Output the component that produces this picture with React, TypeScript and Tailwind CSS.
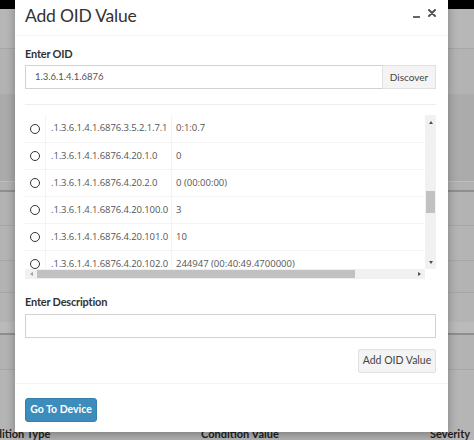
import React from 'react';

interface OidRow {
  oid: string;
  value: string;
}

const rows: OidRow[] = [
  { oid: '.1.3.6.1.4.1.6876.3.5.2.1.7.1', value: '0:1:0.7' },
  { oid: '.1.3.6.1.4.1.6876.4.20.1.0', value: '0' },
  { oid: '.1.3.6.1.4.1.6876.4.20.2.0', value: '0 (00:00:00)' },
  { oid: '.1.3.6.1.4.1.6876.4.20.100.0', value: '3' },
  { oid: '.1.3.6.1.4.1.6876.4.20.101.0', value: '10' },
  { oid: '.1.3.6.1.4.1.6876.4.20.102.0', value: '244947 (00:40:49.4700000)' },
];

const sans = "font-['Lato','Noto_Sans',sans-serif]";
const tableFont = "font-['Open_Sans','Noto_Sans',sans-serif]";

// dimmed page behind the modal
const Backdrop: React.FC = () => (
  <div className="flex flex-col w-full h-full">
    <div className="h-[9px] bg-black" />
    <div className="h-[41px] bg-[#b7b7b7] border-b border-[#a7a7a7]" />
    <div className="h-[46px] bg-[#b3b3b3]" />
    <div className="h-[90px] bg-[#ababab] border-b border-[#bdbdbd]" />
    <div className="h-[10px] bg-[#b1b1b1] border-b-2 border-[#8f8f8f]" />
    <div className="h-[35px] bg-[#b3b3b3] border-b border-[#a6a6a6]" />
    <div className="h-[36px] bg-[#b4b4b4] border-b border-[#a6a6a6]" />
    <div className="h-[32px] bg-[#b3b3b3] border-b border-[#a6a6a6]" />
    <div className="h-[30px] bg-[#b4b4b4]" />
    <div className="h-[13px] bg-[#bababa] border-b-2 border-[#8e8e8e]" />
    <div className="h-[36px] bg-[#b3b3b3] border-b border-[#a6a6a6]" />
    <div className="flex-1 bg-[#b5b5b5]">
      <div
        className={`flex items-start pt-[58px] text-[11px] font-bold text-[#222] leading-[12px] ${sans}`}
      >
        <span className="ml-[-24px] w-[225px] shrink-0">Condition Type</span>
        <span className="w-[229px] shrink-0">Condition Value</span>
        <span className="shrink-0">Severity</span>
      </div>
    </div>
  </div>
);

const Radio: React.FC = () => (
  <span className="block w-[10px] h-[10px] rounded-full border-[1.5px] border-[#333] bg-white" />
);

const OidTable: React.FC = () => (
  <div className="flex flex-col">
    <div className="flex h-[154px]">
      <div className="flex-1 overflow-hidden">
        <div className={`w-[520px] text-[9.5px] text-[#555] ${tableFont}`}>
          {rows.map((row, i) => (
            <div
              key={row.oid}
              className={`flex items-center h-[27px] ${i > 0 ? 'border-t border-[#f4f4f4]' : ''}`}
            >
              <div className="w-[21px] h-full flex items-center justify-center border-r border-[#f4f4f4]">
                <Radio />
              </div>
              <div className="w-[126px] h-full flex items-center pl-[5px] border-r border-[#f4f4f4] tracking-[-0.1px]">
                {row.oid}
              </div>
              <div className="flex-1 h-full flex items-center pl-[4px]">{row.value}</div>
            </div>
          ))}
        </div>
      </div>
      <div className="w-[11px] bg-[#f1f1f1] flex flex-col items-center">
        <div className="h-[12px] flex items-center justify-center pt-[2px]">
          <span className="block w-0 h-0 border-l-[2.5px] border-r-[2.5px] border-b-[3px] border-l-transparent border-r-transparent border-b-[#505050]" />
        </div>
        <div className="h-[64px]" />
        <div className="w-[9px] h-[22px] bg-[#c1c1c1]" />
        <div className="flex-1" />
        <div className="h-[12px] flex items-center justify-center pb-[2px]">
          <span className="block w-0 h-0 border-l-[2.5px] border-r-[2.5px] border-t-[3px] border-l-transparent border-r-transparent border-t-[#505050]" />
        </div>
      </div>
    </div>
    <div className="flex h-[10px]">
      <div className="w-[400px] bg-[#f1f1f1] flex items-center">
        <div className="w-[12px] flex items-center justify-center">
          <span className="block w-0 h-0 border-t-[2.5px] border-b-[2.5px] border-r-[3px] border-t-transparent border-b-transparent border-r-[#a0a0a0]" />
        </div>
        <div className="w-[318px] h-[8px] bg-[#c1c1c1]" />
        <div className="flex-1" />
        <div className="w-[12px] flex items-center justify-center">
          <span className="block w-0 h-0 border-t-[2.5px] border-b-[2.5px] border-l-[3px] border-t-transparent border-b-transparent border-l-[#505050]" />
        </div>
      </div>
    </div>
  </div>
);

const App: React.FC = () => {
  return (
    <div className="relative w-[474px] h-[440px] overflow-hidden">
      <Backdrop />
      <div
        className={`absolute left-[15px] top-0 w-[433px] h-[432px] bg-white shadow-[0_3px_9px_rgba(0,0,0,0.3)] flex flex-col ${sans}`}
      >
        <div className="h-[36px] border-b border-[#f4f4f4] pl-[10px] pr-[12px] flex items-start justify-between">
          <h4 className="text-[17.5px] leading-[26px] pt-[3px] text-[#333] font-normal tracking-[-0.2px]">
            Add OID Value
          </h4>
          <div className="flex items-start gap-[8px] pt-[9px] text-[#555]">
            <span className="block w-[7px] h-[2px] bg-[#666] mt-[7px]" />
            <svg width="8" height="8" viewBox="0 0 8 8">
              <path d="M1 1 L7 7 M7 1 L1 7" stroke="#555" strokeWidth="2" strokeLinecap="round" />
            </svg>
          </div>
        </div>

        <div className="pl-[10px] pr-[12px] pt-[11px] flex flex-col h-[348px] border-b border-[#f4f4f4]">
          <label className="text-[11px] font-bold text-[#333] leading-[14px] tracking-[-0.2px]">Enter OID</label>
          <div className="mt-[4px] flex h-[24px]">
            <div className="flex-1 border border-[#d2d2d2] border-r-0 flex items-center pl-[9px] text-[9.5px] text-[#555]">
              1.3.6.1.4.1.6876
            </div>
            <button className="w-[54px] bg-[#f4f4f4] border border-[#e0e0e0] text-[10px] text-[#444] flex items-center justify-center">
              Discover
            </button>
          </div>
          <div className="mt-[15px] border-t border-[#eeeeee]" />
          <div className="mt-[10px]">
            <OidTable />
          </div>
          <label className="mt-[16px] text-[11px] font-bold text-[#333] leading-[14px] tracking-[-0.2px]">
            Enter Description
          </label>
          <div className="mt-[5px] h-[24px] border border-[#d2d2d2]" />
          <div className="mt-[11px] flex justify-end">
            <button className="w-[78px] h-[24px] bg-[#f4f4f4] border border-[#e0e0e0] rounded-[2px] text-[10.5px] text-[#444]">
              Add OID Value
            </button>
          </div>
        </div>

        <div className="px-[10px] pt-[11px]">
          <button className="w-[72px] h-[24px] bg-[#3c8dbc] border border-[#367fa9] rounded-[3px] text-white text-[10.5px] font-bold">
            Go To Device
          </button>
        </div>
      </div>
    </div>
  );
};

export default App;
